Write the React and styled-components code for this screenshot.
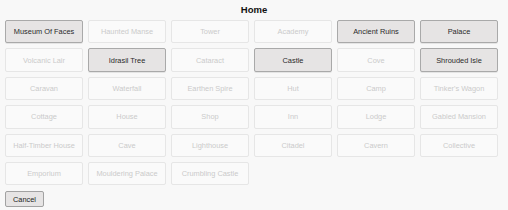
import React from 'react';
import styled, { createGlobalStyle } from 'styled-components';

const fontFamily = '"Liberation Sans", Arial, sans-serif';

const GlobalStyle = createGlobalStyle`
  html, body {
    margin: 0;
    padding: 0;
    background: #f8f8f8;
  }
`;

const Panel = styled.div`
  width: 508px;
  height: 210px;
  box-sizing: border-box;
  padding: 4px 10px 0 5px;
  font-family: ${fontFamily};
  background: #f8f8f8;
`;

const Title = styled.h1`
  margin: 0;
  height: 16px;
  font-size: 9.5px;
  font-weight: bold;
  line-height: 12px;
  text-align: center;
  color: #111;
  padding-left: 5px;
`;

const Grid = styled.div`
  display: grid;
  grid-template-columns: repeat(6, 78px);
  grid-auto-rows: 23.4px;
  column-gap: 5px;
  row-gap: 5px;
`;

const Choice = styled.button`
  box-sizing: border-box;
  margin: 0;
  padding: 0;
  font-family: ${fontFamily};
  font-size: 7.4px;
  border-radius: 2px;
  border: 1px solid ${({ disabled }) => (disabled ? '#e6e6e6' : '#a9a9a9')};
  background: ${({ disabled }) => (disabled ? '#fafafa' : '#e6e4e4')};
  color: ${({ disabled }) => (disabled ? '#cacaca' : '#2a2a2a')};
  box-shadow: ${({ disabled }) => (disabled ? 'none' : '0 1px 0 rgba(0,0,0,0.08)')};
  cursor: ${({ disabled }) => (disabled ? 'default' : 'pointer')};
`;

const Footer = styled.div`
  display: flex;
  padding-top: 6px;
`;

const CancelButton = styled.button`
  box-sizing: border-box;
  width: 39px;
  height: 15.5px;
  margin: 0;
  padding: 0;
  font-family: ${fontFamily};
  font-size: 7.4px;
  color: #222;
  background: #e6e4e4;
  border: 1px solid #a2a2a2;
  border-radius: 2px;
`;

const places = [
  ['Museum Of Faces', true],
  ['Haunted Manse', false],
  ['Tower', false],
  ['Academy', false],
  ['Ancient Ruins', true],
  ['Palace', true],
  ['Volcanic Lair', false],
  ['Idrasil Tree', true],
  ['Cataract', false],
  ['Castle', true],
  ['Cove', false],
  ['Shrouded Isle', true],
  ['Caravan', false],
  ['Waterfall', false],
  ['Earthen Spire', false],
  ['Hut', false],
  ['Camp', false],
  ["Tinker's Wagon", false],
  ['Cottage', false],
  ['House', false],
  ['Shop', false],
  ['Inn', false],
  ['Lodge', false],
  ['Gabled Mansion', false],
  ['Half-Timber House', false],
  ['Cave', false],
  ['Lighthouse', false],
  ['Citadel', false],
  ['Cavern', false],
  ['Collective', false],
  ['Emporium', false],
  ['Mouldering Palace', false],
  ['Crumbling Castle', false],
];

const App = () => (
  <>
    <GlobalStyle />
    <Panel>
      <Title>Home</Title>
      <Grid>
        {places.map(([name, enabled]) => (
          <Choice key={name} disabled={!enabled}>
            {name}
          </Choice>
        ))}
      </Grid>
      <Footer>
        <CancelButton>Cancel</CancelButton>
      </Footer>
    </Panel>
  </>
);

export default App;
